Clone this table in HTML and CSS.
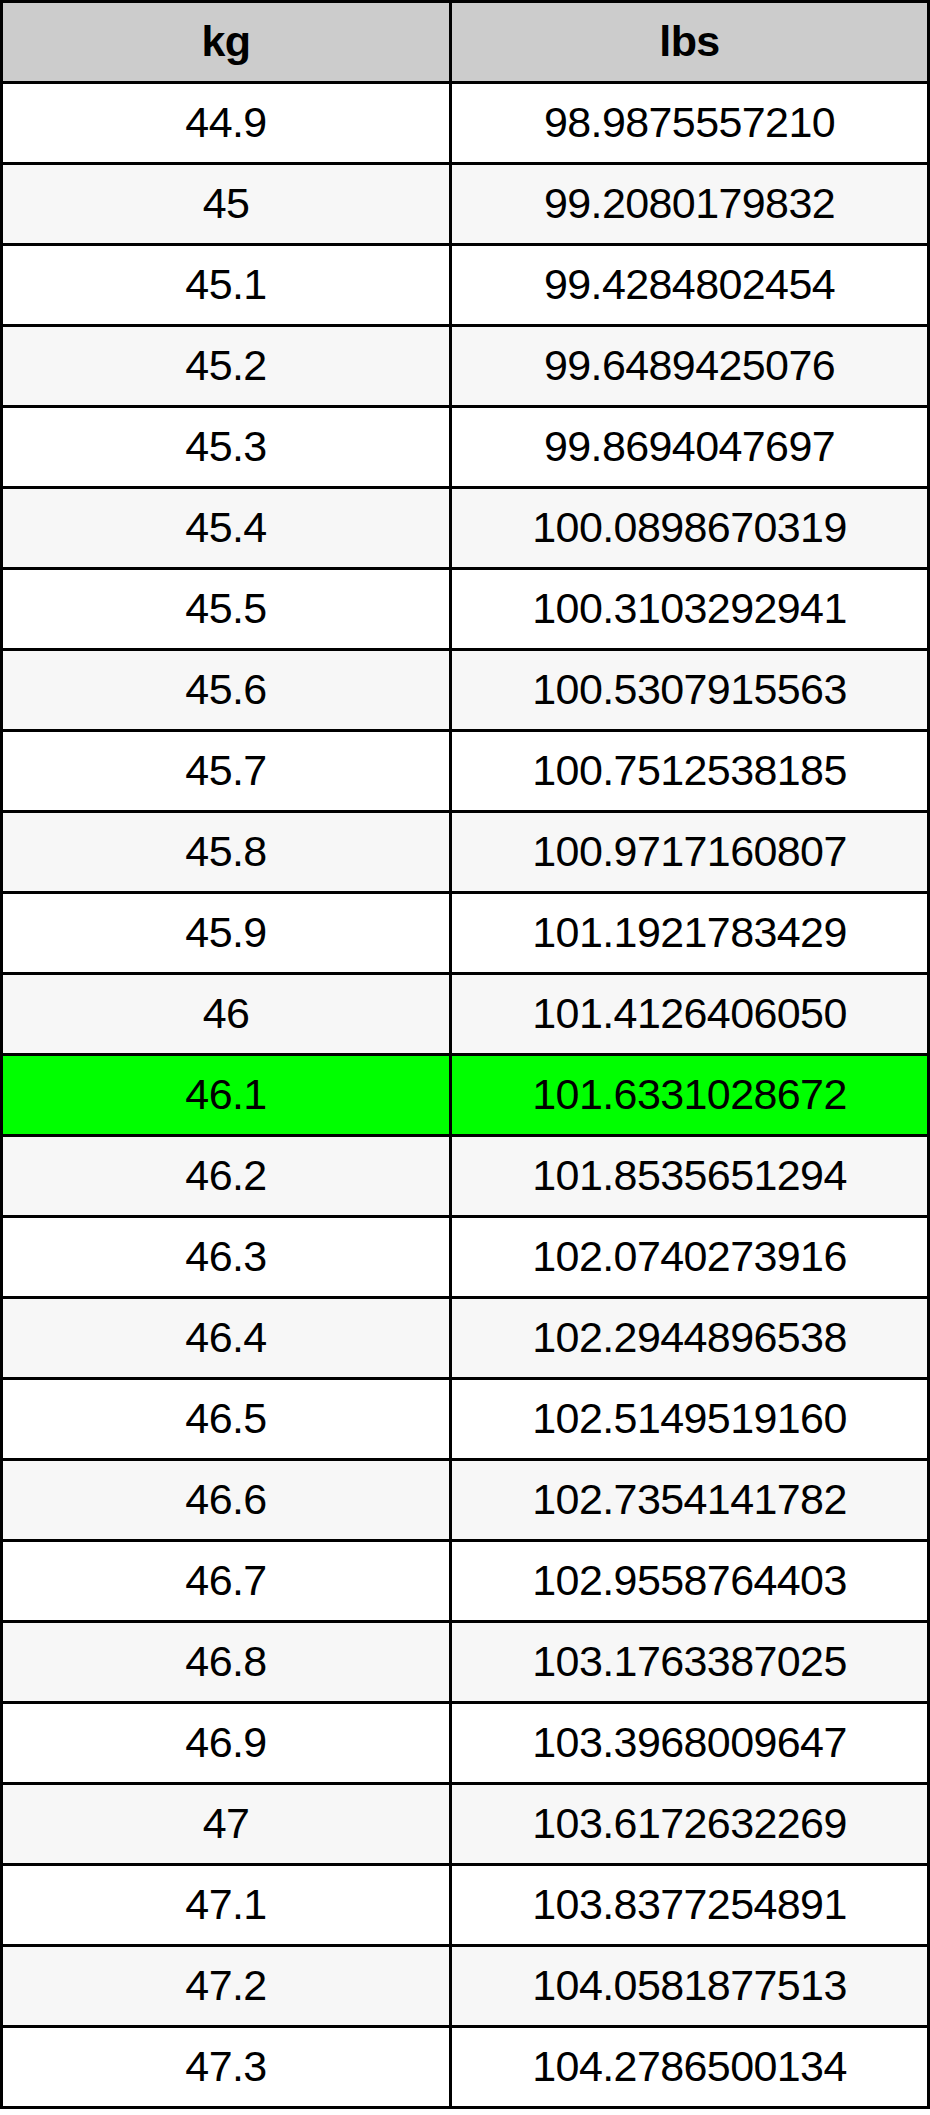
FILE: index.html
```html
<!DOCTYPE html>
<html>
<head>
<meta charset="utf-8">
<title>kg to lbs</title>
<link rel="stylesheet" href="styles.css">
</head>
<body>
<table class="conv">
<colgroup><col class="c-kg"><col class="c-lbs"></colgroup>
<thead>
<tr><th>kg</th><th>lbs</th></tr>
</thead>
<tbody>
<tr><td>44.9</td><td>98.9875557210</td></tr>
<tr><td>45</td><td>99.2080179832</td></tr>
<tr><td>45.1</td><td>99.4284802454</td></tr>
<tr><td>45.2</td><td>99.6489425076</td></tr>
<tr><td>45.3</td><td>99.8694047697</td></tr>
<tr><td>45.4</td><td>100.0898670319</td></tr>
<tr><td>45.5</td><td>100.3103292941</td></tr>
<tr><td>45.6</td><td>100.5307915563</td></tr>
<tr><td>45.7</td><td>100.7512538185</td></tr>
<tr><td>45.8</td><td>100.9717160807</td></tr>
<tr><td>45.9</td><td>101.1921783429</td></tr>
<tr><td>46</td><td>101.4126406050</td></tr>
<tr class="hl"><td>46.1</td><td>101.6331028672</td></tr>
<tr><td>46.2</td><td>101.8535651294</td></tr>
<tr><td>46.3</td><td>102.0740273916</td></tr>
<tr><td>46.4</td><td>102.2944896538</td></tr>
<tr><td>46.5</td><td>102.5149519160</td></tr>
<tr><td>46.6</td><td>102.7354141782</td></tr>
<tr><td>46.7</td><td>102.9558764403</td></tr>
<tr><td>46.8</td><td>103.1763387025</td></tr>
<tr><td>46.9</td><td>103.3968009647</td></tr>
<tr><td>47</td><td>103.6172632269</td></tr>
<tr><td>47.1</td><td>103.8377254891</td></tr>
<tr><td>47.2</td><td>104.0581877513</td></tr>
<tr><td>47.3</td><td>104.2786500134</td></tr>
</tbody>
</table>
</body>
</html>
```
FILE: styles.css
```css
html, body {
  margin: 0;
  padding: 0;
  background: #ffffff;
}

.conv {
  width: 930px;
  border-collapse: separate;
  border-spacing: 3px;
  background: #000000;
  table-layout: fixed;
  font-family: "Liberation Sans", Arial, sans-serif;
  font-size: 43px;
  letter-spacing: -0.6px;
  color: #000000;
}

.c-kg { width: 446px; }
.c-lbs { width: 475px; }

.conv th,
.conv td {
  height: 78px;
  padding: 0 0 2px 0;
  box-sizing: border-box;
  text-align: center;
  vertical-align: middle;
  background: #ffffff;
}

.conv th {
  background: #cccccc;
  font-weight: bold;
}

.conv tbody tr:nth-child(even) td {
  background: #f7f7f7;
}

.conv tbody tr.hl td {
  background: #00ff00;
}
```
